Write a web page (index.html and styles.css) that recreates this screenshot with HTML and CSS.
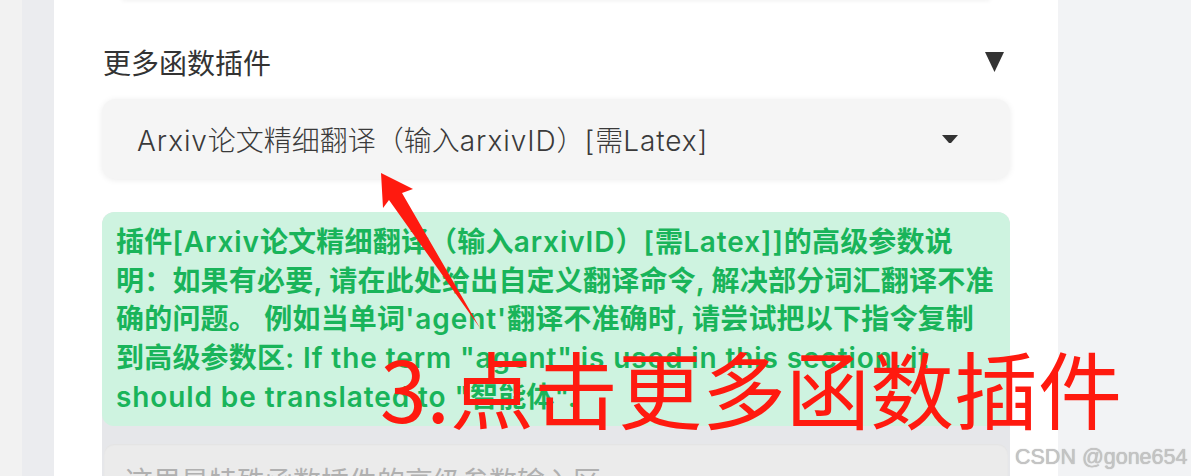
FILE: index.html
```html
<!DOCTYPE html>
<html lang="zh-CN">
<head>
<meta charset="utf-8">
<title>更多函数插件</title>
<link rel="stylesheet" href="styles.css">
</head>
<body>
<div class="rail-a"></div>
<div class="rail-b"></div>
<main class="main">
  <div class="top-shade"></div>
  <div class="head">
    <span class="head-title">更多函数插件</span>
    <svg class="head-tri" width="19" height="20" viewBox="0 0 19 20"><polygon points="0,0 19,0 9.5,20" fill="#333"/></svg>
  </div>
  <div class="dropdown">
    <span class="dropdown-value"><span class="lat">Arxiv</span>论文精细翻译（输入<span class="lat">arxivID</span>）<span class="lat">[</span>需<span class="lat">Latex]</span></span>
    <svg class="dropdown-caret" width="16" height="9" viewBox="0 0 16 9"><polygon points="0,0 16,0 9,8 7,8" fill="#333"/></svg>
  </div>
  <div class="arg-block">
    <div class="arg-info">插件<span class="lat">[Arxiv</span>论文精细翻译（输入<span class="lat">arxivID</span>）<span class="lat">[</span>需<span class="lat">Latex]]</span>的高级参数说<br>明：如果有必要, 请在此处给出自定义翻译命令, 解决部分词汇翻译不准<br>确的问题。 例如当单词<span class="lat">'agent'</span>翻译不准确时, 请尝试把以下指令复制<br>到高级参数区<span class="lat">: If the term "agent" is used in this section, it</span><br><span class="lat">should be translated to "</span>智能体<span class="lat">".</span></div>
    <div class="arg-input"><span class="placeholder">这里是特殊函数插件的高级参数输入区</span></div>
  </div>
</main>
<div class="side"></div>

<svg class="arrow" width="1191" height="476" viewBox="0 0 1191 476"><polygon points="381,173 413,189 402,193 480,328 389,200 383,208" fill="#ff1a0f"/></svg>
<div class="note">3.点击更多函数插件</div>
<div class="watermark">CSDN @gone654</div>
</body>
</html>
```

FILE: styles.css
```css
html, body {
  margin: 0;
  padding: 0;
}
body {
  width: 1191px;
  height: 476px;
  overflow: hidden;
  display: flex;
  position: relative;
  font-family: Inter, "Noto Sans CJK SC", sans-serif;
  background: #ffffff;
}
.rail-a {
  width: 22px;
  background: #f2f2f2;
}
.rail-b {
  width: 32px;
  background: #ebecef;
}
.main {
  width: 1004px;
  height: 476px;
  overflow: hidden;
  box-sizing: border-box;
  padding: 0 48px;
  background: #ffffff;
}
.side {
  flex: 1;
  background: #f2f3f5;
}
.top-shade {
  height: 4px;
  margin: -4px 20px 0 20px;
  background: #ffffff;
  box-shadow: 0 1px 4px rgba(0, 0, 0, 0.06);
}
.head {
  margin-top: 42px;
  height: 40px;
  display: flex;
  align-items: center;
  justify-content: space-between;
}
.head-title {
  font-family: "Noto Sans CJK SC", sans-serif;
  font-size: 28px;
  color: #333333;
  padding-left: 1px;
}
.head-tri {
  margin-right: 6px;
}
.dropdown {
  margin-top: 17px;
  height: 80px;
  box-sizing: border-box;
  padding: 0 52px 0 35px;
  display: flex;
  align-items: center;
  justify-content: space-between;
  background: #f5f5f5;
  border-radius: 14px;
  box-shadow: 0 1px 6px rgba(0, 0, 0, 0.08);
}
.dropdown-value {
  font-size: 28px;
  color: #3a3a3a;
  font-weight: 300;
  white-space: nowrap;
}
.lat {
  letter-spacing: 0.9px;
}
.arg-block {
  margin-top: 33px;
  background: #e6e7ea;
  border-radius: 12px 12px 0 0;
  height: 264px;
  overflow: hidden;
}
.arg-info {
  background: #cef3e0;
  border-radius: 12px;
  padding: 11px 14px 9px 14px;
  font-size: 28px;
  line-height: 38.7px;
  font-weight: 600;
  color: #19b45a;
  white-space: nowrap;
  letter-spacing: 0.2px;
}
.arg-input {
  margin: 18px 2px 0 2px;
  height: 60px;
  background: #ebebeb;
  border-radius: 10px 10px 0 0;
  box-shadow: inset 0 1px 2px rgba(0, 0, 0, 0.04);
  padding: 16px 21px 0 21px;
}
.placeholder {
  font-family: "Noto Sans CJK SC", sans-serif;
  font-size: 28px;
  line-height: 40px;
  color: #b0b0b0;
}
.arrow {
  position: absolute;
  left: 0;
  top: 0;
  pointer-events: none;
}
.note {
  position: absolute;
  left: 380px;
  top: 327px;
  font-family: "Noto Sans CJK SC", sans-serif;
  font-size: 84px;
  line-height: 120px;
  color: #ff1a0f;
  white-space: nowrap;
}
.watermark {
  position: absolute;
  left: 1015px;
  top: 443px;
  font-family: "Liberation Sans", Arial, sans-serif;
  font-size: 21.5px;
  line-height: 28px;
  color: #c4c4c4;
  text-shadow: 0 0 1px #a8a8a8;
  white-space: nowrap;
}
```
